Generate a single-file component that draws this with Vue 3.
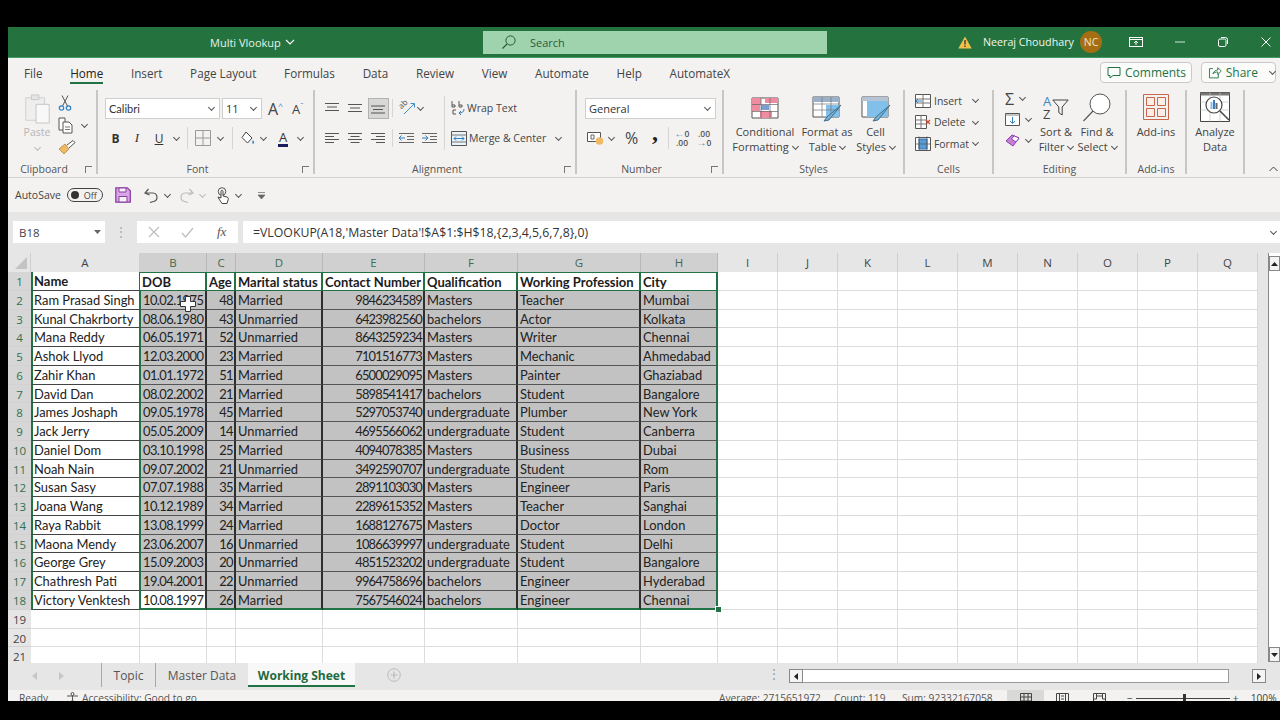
<script setup>
const tabs = ['File', 'Home', 'Insert', 'Page Layout', 'Formulas', 'Data', 'Review', 'View', 'Automate', 'Help', 'AutomateX']
const columns = ['A', 'B', 'C', 'D', 'E', 'F', 'G', 'H', 'I', 'J', 'K', 'L', 'M', 'N', 'O', 'P', 'Q']
const headers = ['Name', 'DOB', 'Age', 'Marital status', 'Contact Number', 'Qualification', 'Working Profession', 'City']
const people = [
  ['Ram Prasad Singh', '10.02.1975', '48', 'Married', '9846234589', 'Masters', 'Teacher', 'Mumbai'],
  ['Kunal Chakrborty', '08.06.1980', '43', 'Unmarried', '6423982560', 'bachelors', 'Actor', 'Kolkata'],
  ['Mana Reddy', '06.05.1971', '52', 'Unmarried', '8643259234', 'Masters', 'Writer', 'Chennai'],
  ['Ashok Llyod', '12.03.2000', '23', 'Married', '7101516773', 'Masters', 'Mechanic', 'Ahmedabad'],
  ['Zahir Khan', '01.01.1972', '51', 'Married', '6500029095', 'Masters', 'Painter', 'Ghaziabad'],
  ['David Dan', '08.02.2002', '21', 'Married', '5898541417', 'bachelors', 'Student', 'Bangalore'],
  ['James Joshaph', '09.05.1978', '45', 'Married', '5297053740', 'undergraduate', 'Plumber', 'New York'],
  ['Jack Jerry', '05.05.2009', '14', 'Unmarried', '4695566062', 'undergraduate', 'Student', 'Canberra'],
  ['Daniel Dom', '03.10.1998', '25', 'Married', '4094078385', 'Masters', 'Business', 'Dubai'],
  ['Noah Nain', '09.07.2002', '21', 'Unmarried', '3492590707', 'undergraduate', 'Student', 'Rom'],
  ['Susan Sasy', '07.07.1988', '35', 'Married', '2891103030', 'Masters', 'Engineer', 'Paris'],
  ['Joana Wang', '10.12.1989', '34', 'Married', '2289615352', 'Masters', 'Teacher', 'Sanghai'],
  ['Raya Rabbit', '13.08.1999', '24', 'Married', '1688127675', 'Masters', 'Doctor', 'London'],
  ['Maona Mendy', '23.06.2007', '16', 'Unmarried', '1086639997', 'undergraduate', 'Student', 'Delhi'],
  ['George Grey', '15.09.2003', '20', 'Unmarried', '4851523202', 'undergraduate', 'Student', 'Bangalore'],
  ['Chathresh Pati', '19.04.2001', '22', 'Unmarried', '9964758696', 'bachelors', 'Engineer', 'Hyderabad'],
  ['Victory Venktesh', '10.08.1997', '26', 'Married', '7567546024', 'bachelors', 'Engineer', 'Chennai'],
]

// A is plain, B18 is the active cell, everything else sits in the grey selection
const cellClass = (r, c) => {
  if (c === 0) return ['cell', 'name']
  const kind = { num: c === 1 || c === 2, phone: c === 4, right: c === 2 || c === 4 }
  if (r === 16 && c === 1) return ['cell', 'active', kind]
  return ['cell', 'sel', kind, { last: c === 7, bottom: r === 16, firstsel: c === 1 }]
}
</script>

<template>
  <div class="screen">
    <div class="excel">
      <!-- title bar -->
      <header class="titlebar">
        <div class="doc">Multi Vlookup
          <svg width="10" height="6" viewBox="0 0 10 6"><path d="M1 1l4 4 4-4" fill="none" stroke="#fff" stroke-width="1.1"/></svg>
        </div>
        <div class="search">
          <svg width="16" height="16" viewBox="0 0 16 16"><circle cx="9.500" cy="6.500" r="4.600" fill="none" stroke="#25593a" stroke-width="1"/><path d="M6 10l-4.500 4.500" stroke="#25593a" stroke-width="1.100"/></svg>
          <span>Search</span>
        </div>
        <div class="account">
          <svg width="14" height="13" viewBox="0 0 14 13"><path d="M7 .5l6.700 12H.3z" fill="#f1c04b"/><path d="M7 4v4.500M7 9.600v1.300" stroke="#333" stroke-width="1.300"/></svg>
          <span class="user">Neeraj Choudhary</span>
          <span class="avatar">NC</span>
        </div>
        <div class="winbtns">
          <svg width="14" height="12" viewBox="0 0 14 12"><rect x=".5" y="1.500" width="13" height="9" fill="none" stroke="#fff"/><path d="M.5 3.500h13M7 9V5M5 7l2-2 2 2" fill="none" stroke="#fff"/></svg>
          <svg width="12" height="12" viewBox="0 0 12 12"><path d="M1 6h10" stroke="#cfe3d6"/></svg>
          <svg width="12" height="12" viewBox="0 0 12 12"><rect x="1.500" y="3" width="7.500" height="7.500" rx="1.500" fill="none" stroke="#fff"/><path d="M4 1.500h4.500a2 2 0 0 1 2 2V8" fill="none" stroke="#fff"/></svg>
          <svg width="12" height="12" viewBox="0 0 12 12"><path d="M1.500 1.500l9 9M10.500 1.500l-9 9" stroke="#fff"/></svg>
        </div>
      </header>

      <!-- ribbon tabs -->
      <nav class="tabs">
        <span v-for="t in tabs" :key="t" class="tab" :class="{ on: t === 'Home' }">{{ t }}</span>
        <div class="tab-actions">
          <button class="pill comments">
            <svg width="14" height="13" viewBox="0 0 14 13"><path d="M1 1.500h12v8H6l-3 2.500V9.500H1z" fill="none" stroke="#217346"/></svg>
            Comments
          </button>
          <button class="pill share">
            <svg width="14" height="13" viewBox="0 0 14 13"><path d="M5 2.500H1.500v9.500h9V8M5 8c1-3 3-4 5-4V1.500L13.500 5 10 8.500V6C8 6 6 6.500 5 8z" fill="none" stroke="#217346" stroke-width=".9"/></svg>
            Share <i class="chev"></i>
          </button>
        </div>
      </nav>

      <!-- ribbon -->
      <section class="ribbon">
        <div class="group g-clip">
          <div class="body clip-body">
            <div class="paste">
              <svg width="28" height="30" viewBox="0 0 28 32"><path d="M2 4h20v24H2z" fill="#eee" stroke="#cfcfcf"/><path d="M8 1h8v5H8z" fill="#e4e4e4" stroke="#c8c8c8"/><path d="M13 11h14v20H13z" fill="#f8f8f8" stroke="#c4c4c4"/></svg>
              <span>Paste</span>
              <i class="chev faint"></i>
            </div>
            <div class="clip-tools">
              <svg width="14" height="16" viewBox="0 0 14 16"><path d="M4 .5l5.500 10.500M10 .5L4.500 11" stroke="#555" fill="none"/><circle cx="3.500" cy="13" r="2.200" fill="none" stroke="#2f7fc1" stroke-width="1.200"/><circle cx="10.500" cy="13" r="2.200" fill="none" stroke="#2f7fc1" stroke-width="1.200"/></svg>
              <div class="tool-chev">
                <svg width="17" height="17" viewBox="0 0 17 17"><path d="M1 1h6v12H1z" fill="#fff" stroke="#555"/><path d="M5 5h6l3 3v8H5z" fill="#fff" stroke="#555"/><path d="M7 10h5M7 12.500h5" stroke="#777"/></svg>
                <i class="chev"></i>
              </div>
              <svg width="18" height="15" viewBox="0 0 18 15"><path d="M1 9l6-5 4 5-5 5z" fill="#f0b964" stroke="#a77b3a" stroke-width=".7"/><path d="M9 5l6-4.500 2 2L11 8" fill="#fff" stroke="#555"/></svg>
            </div>
          </div>
          <footer class="label shifted">Clipboard<i class="launch"></i></footer>
        </div>

        <div class="group g-font">
          <div class="body">
            <div class="font-r1">
              <div class="combo font-name">Calibri<i class="chev"></i></div>
              <div class="combo font-size">11<i class="chev"></i></div>
              <span class="grow big">A<sup>^</sup></span>
              <span class="grow small">A<sup>ˇ</sup></span>
            </div>
            <div class="font-r2">
              <b class="cal">B</b>
              <i class="cal ital">I</i>
              <u class="cal">U</u>
              <i class="chev"></i>
              <i class="vsep"></i>
              <svg width="16" height="16" viewBox="0 0 16 16"><path d="M.5.500h15v15H.500zM8 .5v15M.5 8h15" fill="none" stroke="#9a9a9a"/></svg>
              <i class="chev"></i>
              <i class="vsep"></i>
              <svg width="15" height="14" viewBox="0 0 15 14"><path d="M6 1l6 6-4.500 5L2 6.500z" fill="#fff" stroke="#444"/><path d="M13 9c1 1.500 1.500 2 1 3.200-.6 1-2 .6-1.900-.6 0-.7.500-1.500.9-2.600z" fill="#3b8ec9"/></svg>
              <i class="chev"></i>
              <span class="color-a">A</span>
              <i class="chev"></i>
            </div>
          </div>
          <footer class="label shifted">Font<i class="launch"></i></footer>
        </div>

        <div class="group g-align">
          <div class="body align-body">
            <div class="align-grid">
              <svg class="ic" width="14" height="12" viewBox="0 0 14 12"><path d="M0 1.500h14M2 5h10M0 8.500h14" stroke="#555"/></svg>
              <svg class="ic" width="14" height="12" viewBox="0 0 14 12"><path d="M0 2.500h14M2 6h10M0 9.500h14" stroke="#555"/></svg>
              <span class="selected-btn"><svg width="14" height="12" viewBox="0 0 14 12"><path d="M0 4h14M2 7.500h10M0 11h14" stroke="#555"/></svg></span>
              <i class="vsep"></i>
              <span class="orient-btn">
                <span class="orient">ab</span>
                <svg width="18" height="16" viewBox="0 0 18 16"><path d="M6 14L16 4M12.500 3.500H16.500V7.500" fill="none" stroke="#3b8ec9"/></svg>
              </span>
              <i class="chev start"></i>
              <svg class="ic" width="14" height="12" viewBox="0 0 14 12"><path d="M0 1.500h14M0 4.500h9M0 7.500h14M0 10.500h9" stroke="#555"/></svg>
              <svg class="ic" width="14" height="12" viewBox="0 0 14 12"><path d="M0 1.500h14M2.500 4.500h9M0 7.500h14M2.500 10.500h9" stroke="#555"/></svg>
              <svg class="ic" width="14" height="12" viewBox="0 0 14 12"><path d="M0 1.500h14M5 4.500h9M0 7.500h14M5 10.500h9" stroke="#555"/></svg>
              <i class="vsep"></i>
              <svg width="15" height="12" viewBox="0 0 15 12"><path d="M0 1.500h15M8 4.500h7M8 7.500h7M0 10.500h15" stroke="#666"/><path d="M6 6H0M2.500 3.500L0 6l2.500 2.500" fill="none" stroke="#2f7fc1"/></svg>
              <svg width="15" height="12" viewBox="0 0 15 12"><path d="M0 1.500h15M8 4.500h7M8 7.500h7M0 10.500h15" stroke="#666"/><path d="M0 6h6M3.500 3.500L6 6 3.500 8.500" fill="none" stroke="#2f7fc1"/></svg>
            </div>
            <i class="vsep tall"></i>
            <div class="align-right">
              <div class="wrap-item">
                <svg width="14" height="16" viewBox="0 0 14 16"><path d="M1 1v6M1 5h3v2H1M8 1v6h3V5H8" fill="none" stroke="#555"/><path d="M13 9c0 3-2 4-5 4M10 11l-2 2 2 2" fill="none" stroke="#2f7fc1"/><path d="M5 10H2v4h3" fill="none" stroke="#555"/></svg>
                Wrap Text
              </div>
              <div class="wrap-item">
                <svg width="16" height="15" viewBox="0 0 16 15"><path d="M.5.500h15v14H.500z" fill="#eaf3fa" stroke="#555"/><path d="M.5 4h15M.5 11h15" stroke="#777"/><path d="M3 7.500h10M5 5.500l-2 2 2 2M11 5.500l2 2-2 2" fill="none" stroke="#2f7fc1"/></svg>
                Merge &amp; Center <i class="chev merge-chev"></i>
              </div>
            </div>
          </div>
          <footer class="label shifted">Alignment<i class="launch"></i></footer>
        </div>

        <div class="group g-num">
          <div class="body">
            <div class="combo general">General<i class="chev"></i></div>
            <div class="num-r2">
              <svg width="17" height="13" viewBox="0 0 17 13"><path d="M.5.500h13v9H.500z" fill="#fff" stroke="#555"/><path d="M4 3h3v4H4z" fill="none" stroke="#666"/><circle cx="12.500" cy="9" r="3.800" fill="#f0b964"/></svg>
              <i class="chev"></i>
              <span class="percent">%</span>
              <span class="comma">,</span>
              <i class="vsep"></i>
              <span class="dec"><em>←</em>0<br>.00</span>
              <span class="dec">.00<br><em>→</em>0</span>
            </div>
          </div>
          <footer class="label shifted">Number<i class="launch"></i></footer>
        </div>

        <div class="group g-styles">
          <div class="body big-row">
            <div class="big-btn b-cond">
              <svg width="28" height="22" viewBox="0 0 28 22"><path d="M1 1h26v20H1z" fill="#fff" stroke="#555"/><path d="M1 1h9v7H1zM14 1h13v5H14zM9 14h12v7H9z" fill="#ee8d9f"/><path d="M1 8h8v6H1z" fill="#ee8d9f"/><path d="M10 8h8v5h-8z" fill="#7d9fd0"/><path d="M1 7.500h26M1 14.500h26M10 1v20M19 1v20" stroke="#666" fill="none" stroke-width=".7"/></svg>
              <span>Conditional</span>
              <span>Formatting <i class="chev"></i></span>
            </div>
            <div class="big-btn b-fmt">
              <svg width="30" height="26" viewBox="0 0 30 26"><path d="M1 1h26v20H1z" fill="#fff" stroke="#555"/><path d="M1 1h26v5H1z" fill="#9ab0c8"/><path d="M14 9h13v12H14z" fill="#80c0ea"/><path d="M1 8h26M1 14h26M10 1v20M19 1v20" stroke="#777" stroke-width=".7"/><path d="M29 9L15 21l-3 4 5-1z" fill="#7db0d0" stroke="#3c6f90"/></svg>
              <span>Format as</span>
              <span>Table <i class="chev"></i></span>
            </div>
            <div class="big-btn b-cell">
              <svg width="30" height="26" viewBox="0 0 30 26"><path d="M1 1h26v20H1z" fill="#fff" stroke="#555"/><path d="M1 1h26v4H1z" fill="#b4c4d4"/><path d="M6 5h21v16H6z" fill="#80c0ea"/><path d="M29 9L15 21l-3 4 5-1z" fill="#7db0d0" stroke="#3c6f90"/></svg>
              <span>Cell</span>
              <span>Styles <i class="chev"></i></span>
            </div>
          </div>
          <footer class="label">Styles</footer>
        </div>

        <div class="group g-cells">
          <div class="body small-list">
            <div class="list-item">
              <svg width="16" height="14" viewBox="0 0 16 14"><path d="M.5.500h15v13H.500z" fill="#fff" stroke="#555"/><path d="M8 .5v13M.5 5h15M.5 9h15" stroke="#777"/><path d="M7 7H1M3 5L1 7l2 2" fill="none" stroke="#2f7fc1"/></svg>
              <span>Insert</span><i class="chev"></i>
            </div>
            <div class="list-item">
              <svg width="16" height="14" viewBox="0 0 16 14"><path d="M.5.500h11v13H.500z" fill="#fff" stroke="#555"/><path d="M.5 5h11M.5 9h11M6 .5v13" stroke="#777"/><path d="M11 5l4 4M15 5l-4 4" stroke="#d1492f" stroke-width="1.200"/></svg>
              <span>Delete</span><i class="chev"></i>
            </div>
            <div class="list-item">
              <svg width="16" height="15" viewBox="0 0 16 15"><path d="M.5 1.500h15v13H.500z" fill="#fff" stroke="#555"/><path d="M4 3h8v10H4z" fill="#5b9bd5" stroke="#2f6fa5"/><path d="M4 .5v14M12 .5v14M.5 8h15" stroke="#555" stroke-width=".7"/></svg>
              <span>Format</span><i class="chev"></i>
            </div>
          </div>
          <footer class="label">Cells</footer>
        </div>

        <div class="group g-edit">
          <div class="body edit-body">
            <div class="edit-tools">
              <div class="tool-chev tool-sum">Σ<i class="chev"></i></div>
              <div class="tool-chev">
                <svg width="15" height="13" viewBox="0 0 15 13"><path d="M.5.500h14v12H.500z" fill="#fff" stroke="#555"/><path d="M.5 2h14" stroke="#888"/><path d="M7.500 4v6M5 8l2.500 2.500L10 8" fill="none" stroke="#2f7fc1"/></svg>
                <i class="chev"></i>
              </div>
              <div class="tool-chev">
                <svg width="15" height="13" viewBox="0 0 15 13"><path d="M1 7l6-6 7 3-6 8z" fill="#c77fd6" stroke="#8b3fa5"/><path d="M9 1.800l5 2.200-3 4-4.500-3z" fill="#fff" stroke="#8b3fa5"/></svg>
                <i class="chev"></i>
              </div>
            </div>
            <div class="big-btn b-sort">
              <div class="sort-icon">
                <div class="az"><b class="blue">A</b><b>Z</b></div>
                <svg width="17" height="17" viewBox="0 0 17 17"><path d="M.8 1h15.400l-6 7v8l-3.400-2.400V8z" fill="none" stroke="#444"/></svg>
              </div>
              <span>Sort &amp;</span>
              <span>Filter <i class="chev"></i></span>
            </div>
            <div class="big-btn b-find">
              <svg width="30" height="29" viewBox="0 0 30 29"><circle cx="18" cy="11" r="10" fill="#fff" stroke="#555"/><path d="M11 18L1.500 28" stroke="#555" stroke-width="1.100"/></svg>
              <span>Find &amp;</span>
              <span>Select <i class="chev"></i></span>
            </div>
          </div>
          <footer class="label">Editing</footer>
        </div>

        <div class="group g-add">
          <div class="body big-row">
            <div class="big-btn b-add">
              <svg width="26" height="26" viewBox="0 0 26 26"><path d="M.5.500h25v25H.500z" fill="none" stroke="#c8664a"/><path d="M3.500 3.500h8v8h-8zM14.500 3.500h8v8h-8zM3.500 14.500h8v8h-8zM14.500 14.500h8v8h-8z" fill="#fbeee9" stroke="#c8664a"/></svg>
              <span>Add-ins</span>
            </div>
          </div>
          <footer class="label">Add-ins</footer>
        </div>

        <div class="group g-ana">
          <div class="body big-row">
            <div class="big-btn b-ana">
              <svg width="30" height="30" viewBox="0 0 30 30"><path d="M.5.500h29v29H.500z" fill="#fff" stroke="#444"/><path d="M.5.500h29v3H.500z" fill="#777"/><path d="M.5 10h29M.5 18h29M10 .5v29M20 .5v29" stroke="#c2c2c2" stroke-width=".7"/><circle cx="14" cy="13" r="8" fill="#fff" stroke="#444" stroke-width="1.200"/><path d="M10.500 10h2v7h-2z" fill="#8fb8dc"/><path d="M13 8h2v9h-2z" fill="#3d7fbe"/><path d="M15.500 11h2v6h-2z" fill="#666"/><path d="M20 19l9 9" stroke="#444" stroke-width="1.500"/></svg>
              <span>Analyze</span>
              <span>Data</span>
            </div>
          </div>
        </div>

        <svg class="collapse" width="9" height="6" viewBox="0 0 9 6"><path d="M.5 5l4-4 4 4" fill="none" stroke="#444"/></svg>
      </section>

      <!-- quick access -->
      <div class="qat">
        <span class="qat-label">AutoSave</span>
        <span class="toggle"><i></i>Off</span>
        <svg class="save" width="16" height="16" viewBox="0 0 16 16"><path d="M.8.800h11.500l3 3v11.400H.8z" fill="#d8a6e6" stroke="#8d3fa5" stroke-width="1.300"/><path d="M4 1h7v4H4zM4 9.500h8V15H4z" fill="#f3f2f1" stroke="#8d3fa5"/></svg>
        <svg class="undo" width="15" height="15" viewBox="0 0 15 15"><path d="M4.500 1L1 5l4.500 2M1.500 5H9a4.300 4.300 0 0 1 .5 8.500L6 14.500" fill="none" stroke="#555" stroke-width="1.200"/></svg>
        <i class="chev"></i>
        <svg class="redo" width="15" height="15" viewBox="0 0 15 15"><path d="M10.500 1L14 5 9.500 7M13.500 5H6a4.300 4.300 0 0 0-.5 8.500L9 14.500" fill="none" stroke="#bbb" stroke-width="1.200"/></svg>
        <i class="chev faint"></i>
        <svg class="touch" width="14" height="17" viewBox="0 0 14 17"><circle cx="6" cy="4.500" r="3.800" fill="none" stroke="#555"/><path d="M5 4.500c0-1.500 2-1.500 2 0V9l4 1c1.500.5 1.500 2 1 3l-1 3.500H6L3 12l-1-2 3 1z" fill="#fff" stroke="#444"/></svg>
        <i class="chev"></i>
        <svg class="custom" width="9" height="9" viewBox="0 0 9 9"><path d="M1 1.500h7M1 4h7L4.500 8z" fill="#666" stroke="#666" stroke-width=".7"/></svg>
      </div>

      <!-- formula bar -->
      <div class="formula">
        <div class="namebox">B18<svg width="7" height="4" viewBox="0 0 7 4"><path d="M0 0h7L3.500 4z" fill="#666"/></svg></div>
        <span class="grip">⋮</span>
        <div class="fxbox">
          <svg width="12" height="12" viewBox="0 0 12 12"><path d="M1 1l10 10M11 1L1 11" stroke="#bdbdbd" stroke-width="1.200"/></svg>
          <svg width="13" height="11" viewBox="0 0 13 11"><path d="M1 6l3.500 4L12 1" fill="none" stroke="#bdbdbd" stroke-width="1.200"/></svg>
          <span class="fx">fx</span>
        </div>
        <div class="fxinput">
          <span>=VLOOKUP(A18,'Master Data'!$A$1:$H$18,{2,3,4,5,6,7,8},0)</span>
          <i class="chev"></i>
        </div>
      </div>

      <!-- sheet -->
      <div class="sheet-wrap">
        <div class="sheet">
          <div class="corner"><i></i></div>
          <div v-for="(c, i) in columns" :key="c" class="colhead" :class="{ hl: i > 0 && i < 8 }">{{ c }}</div>
          <div class="rowhead hl">1</div>
          <template v-for="(h, c) in headers" :key="h">
            <div class="cell head" :class="{ name: c === 0 }">{{ h }}</div>
          </template>
          <div v-for="c in 9" :key="'h' + c" class="blank"></div>
          <template v-for="(p, r) in people" :key="r">
            <div class="rowhead hl">{{ r + 2 }}</div>
            <div v-for="(v, c) in p" :key="c" :class="cellClass(r, c)">{{ v }}</div>
            <div v-for="c in 9" :key="'b' + c" class="blank"></div>
          </template>
          <template v-for="r in [19, 20, 21]" :key="r">
            <div class="rowhead">{{ r }}</div>
            <div v-for="c in 17" :key="c" class="blank"></div>
          </template>
          <i class="fill-handle"></i>
          <svg class="cursor" width="18" height="18" viewBox="0 0 18 18"><path d="M6.500 1.500h5v5h5v5h-5v5h-5v-5h-5v-5h5z" fill="#fff" stroke="#333"/></svg>
        </div>
        <div class="vscroll">
          <span class="vbtn"><svg width="7" height="4" viewBox="0 0 7 4"><path d="M3.500 0L7 4H0z" fill="#222"/></svg></span>
          <span class="vtrack"></span>
          <span class="vbtn"><svg width="7" height="4" viewBox="0 0 7 4"><path d="M0 0h7L3.500 4z" fill="#222"/></svg></span>
        </div>
      </div>

      <!-- sheet tabs -->
      <div class="sheetbar">
        <div class="nav-arrows">
          <svg width="5" height="8" viewBox="0 0 5 8"><path d="M5 0v8L0 4z" fill="#c6c6c6"/></svg>
          <svg width="5" height="8" viewBox="0 0 5 8"><path d="M0 0v8l5-4z" fill="#c6c6c6"/></svg>
        </div>
        <span class="stab first">Topic</span>
        <span class="stab master">Master Data</span>
        <span class="stab current">Working Sheet</span>
        <svg class="addsheet" width="14" height="14" viewBox="0 0 14 14"><circle cx="7" cy="7" r="6.300" fill="none" stroke="#bbb"/><path d="M7 3.500v7M3.500 7h7" stroke="#bbb" stroke-width="1.200"/></svg>
        <span class="dots">⋮</span>
        <div class="hscroll">
          <span class="hbtn"><svg width="4" height="7" viewBox="0 0 4 7"><path d="M4 0v7L0 3.500z" fill="#222"/></svg></span>
          <span class="htrack"></span>
          <span class="hgap"></span>
          <span class="hbtn"><svg width="4" height="7" viewBox="0 0 4 7"><path d="M0 0v7l4-3.500z" fill="#222"/></svg></span>
        </div>
      </div>

      <!-- status bar -->
      <footer class="status">
        <span class="ready">Ready</span>
        <span class="a11y">
          <svg width="13" height="13" viewBox="0 0 13 13"><circle cx="6.500" cy="2" r="1.500" fill="none" stroke="#555"/><path d="M1 4h11M6.500 4v4l-3 4M6.500 8l3 4" fill="none" stroke="#555"/></svg>
          Accessibility: Good to go
        </span>
        <span class="avg">Average: 2715651972</span>
        <span class="count">Count: 119</span>
        <span class="total">Sum: 92332167058</span>
        <span class="view on"><svg width="12" height="12" viewBox="0 0 12 12"><path d="M.5.500h11v11H.500zM4 .5v11M8 .5v11M.5 4h11M.5 8h11" fill="none" stroke="#444"/></svg></span>
        <span class="view"><svg width="13" height="12" viewBox="0 0 13 12"><path d="M.5.500h12v11H.500zM3.500.5v11M9.500.5v11M5 3h3M5 6h3" fill="none" stroke="#444"/></svg></span>
        <span class="view"><svg width="13" height="12" viewBox="0 0 13 12"><path d="M.5.500h12v11H.500zM.5 6h3V.5M12.500 6h-3V.5M3.500 3h6" fill="none" stroke="#444"/></svg></span>
        <span class="zoom">
          <em>−</em>
          <span class="slider"><i></i></span>
          <em>+</em>
          <span class="pct">100%</span>
        </span>
      </footer>
    </div>
  </div>
</template>

<style scoped>
.screen {
  width: 1280px;
  height: 720px;
  background: #000;
  padding: 27px 0 0 8px;
  box-sizing: border-box;
  overflow: hidden;
  font-family: "Open Sans", "Noto Sans", sans-serif;
  color: #444;
}
.excel {
  height: 674px;
  width: 1272px;
  overflow: hidden;
  background: #f3f2f1;
  display: flex;
  flex-direction: column;
}
i, em { font-style: normal; }

.chev {
  display: inline-block;
  width: 4px;
  height: 4px;
  border-right: 1px solid #555;
  border-bottom: 1px solid #555;
  transform: rotate(45deg);
  margin-bottom: 2px;
  flex: none;
}
.chev.faint { border-color: #bbb; }
.vsep {
  display: block;
  width: 1px;
  height: 22px;
  background: #d6d5d3;
}
.vsep.tall { height: 54px; margin: 6px 6px 0 3px; }

/* title bar */
.titlebar {
  height: 31px;
  flex: none;
  background: #24733f;
  border-bottom: 1px solid #3f9a63;
  box-sizing: border-box;
  display: flex;
  align-items: center;
  color: #fff;
  font-size: 11px;
}
.doc {
  margin-left: 202px;
  width: 273px;
  display: flex;
  align-items: center;
  gap: 4px;
  color: #e6f3ea;
}
.search {
  width: 344px;
  height: 23px;
  background: #9fd3ae;
  display: flex;
  align-items: center;
  color: #2c5a3e;
  font-size: 11px;
  padding-left: 18px;
  gap: 13px;
  box-sizing: border-box;
}
.account {
  margin-left: 131px;
  display: flex;
  align-items: center;
}
.user { margin: 0 8px 0 11px; width: 89px; white-space: nowrap; font-size: 10.700px; color: #eef6f0; }
.avatar {
  width: 22px;
  height: 22px;
  border-radius: 50%;
  background: #a56e12;
  font-size: 10.500px;
  line-height: 22px;
  text-align: center;
  color: #f5e3c4;
}
.winbtns {
  margin-left: 27px;
  display: flex;
  align-items: center;
  gap: 31px;
}

/* tabs */
.tabs {
  height: 30px;
  flex: none;
  display: flex;
  align-items: center;
  font-size: 11.700px;
  color: #444;
  padding-left: 16px;
  position: relative;
}
.tab { margin-right: 27.700px; position: relative; white-space: nowrap; line-height: 30px; }
.tab.on { color: #222; }
.tab.on::after {
  content: "";
  position: absolute;
  left: 0;
  right: 0;
  bottom: 4px;
  height: 2px;
  background: #217346;
}
.tab-actions {
  position: absolute;
  left: 1092px;
  top: 4px;
  display: flex;
  gap: 9px;
}
.pill {
  height: 21px;
  background: #fbfbfa;
  border: 1px solid #c9c9c9;
  border-radius: 4px;
  display: flex;
  align-items: center;
  gap: 4px;
  font: 12px "Open Sans", sans-serif;
  color: #217346;
  padding: 0 0 0 6px;
  box-sizing: border-box;
}
.comments { width: 92px; }
.share { width: 75px; }
.share .chev { margin-left: 8px; }

/* ribbon */
.ribbon {
  height: 90px;
  flex: none;
  display: flex;
  border-bottom: 1px solid #d3d2d0;
  box-sizing: border-box;
  font-size: 11px;
  position: relative;
}
.group {
  position: relative;
  display: flex;
  flex-direction: column;
  box-sizing: border-box;
  height: 84px;
  margin-top: 2px;
  border-right: 2px solid #c6c6c4;
}
.body { height: 68px; flex: none; box-sizing: border-box; }
.label {
  height: 16px;
  line-height: 15px;
  font-size: 10.500px;
  text-align: center;
  color: #555;
  position: relative;
  top: 4px;
  box-sizing: border-box;
}
.label.shifted { padding-right: 16px; }
.launch {
  position: absolute;
  right: 4px;
  top: 4px;
  width: 6px;
  height: 6px;
  border-top: 1px solid #777;
  border-left: 1px solid #777;
}
.g-clip { width: 90px; }
.g-font { width: 217px; }
.g-align { width: 262px; }
.g-num { width: 147px; }
.g-styles { width: 181px; }
.g-cells { width: 89px; }
.g-edit { width: 133px; }
.g-add { width: 60px; }
.g-ana { width: 58px; }

.clip-body { display: flex; padding: 4px 0 0 15px; gap: 7px; }
.paste { display: flex; flex-direction: column; align-items: center; width: 28px; color: #b5b5b5; font-size: 10.500px; }
.paste span { margin: 1px 0 6px; }
.clip-tools { display: flex; flex-direction: column; gap: 6px; padding-top: 1px; }
.tool-chev { display: flex; align-items: center; gap: 7px; }

.font-r1 { display: flex; align-items: center; padding: 8px 0 0 7px; gap: 2px; }
.combo {
  height: 21px;
  background: #fff;
  border: 1px solid #cfcfcd;
  box-sizing: border-box;
  display: flex;
  align-items: center;
  justify-content: space-between;
  padding: 0 5px 0 3px;
  color: #333;
  font-size: 11px;
}
.font-name { width: 115px; font-family: "Lato", sans-serif; }
.font-size { width: 40px; }
.grow { color: #444; line-height: 20px; }
.grow sup { font-size: 8px; color: #3f85c0; vertical-align: 6px; line-height: 0; }
.big { font-size: 16px; margin-left: 4px; width: 22px; }
.small { font-size: 13px; }
.font-r2 {
  display: grid;
  grid-template-columns: 21px 22px 22px 12px 10px 22px 12px 12px 18px 14px 26px 8px;
  justify-items: center;
  align-items: center;
  margin: 8px 0 0 7px;
  height: 22px;
  font-size: 13px;
  color: #333;
}
.cal { font-family: "Liberation Serif", serif; font-size: 13px; }
b.cal { font-family: "Open Sans", sans-serif; font-size: 12px; }
u.cal { font-family: "Open Sans", sans-serif; font-size: 12px; }
.ital { font-style: italic; }
.color-a {
  font-size: 13px;
  line-height: 14px;
  border-bottom: 3px solid #1a1a5e;
  padding: 0 1px;
}

.align-body { display: flex; }
.align-grid {
  display: grid;
  grid-template-columns: 22px 24px 22px 6px 23px 23px;
  grid-auto-rows: 22px;
  row-gap: 8px;
  justify-items: center;
  align-items: center;
  padding: 7px 0 0 6px;
}
.align-grid .vsep { height: 18px; }
.start { justify-self: start; }
.orient-btn { position: relative; display: block; width: 18px; height: 16px; }
.orient {
  position: absolute;
  left: 0;
  top: -1px;
  font-size: 8px;
  line-height: 10px;
  color: #555;
  transform: rotate(-45deg);
}
.selected-btn {
  width: 21px;
  height: 21px;
  background: #d8d8d6;
  border: 1px solid #b2b2b0;
  box-sizing: border-box;
  display: flex;
  align-items: center;
  justify-content: center;
}
.align-right { display: flex; flex-direction: column; gap: 8px; padding-top: 7px; }
.wrap-item { display: flex; align-items: center; gap: 2px; height: 22px; white-space: nowrap; font-size: 10.500px; }
.merge-chev { margin-left: 8px; }

.g-num .body { padding: 8px 0 0 8px; }
.general { width: 131px; font-size: 11px; }
.num-r2 {
  display: grid;
  grid-template-columns: 20px 12px 29px 18px 8px 20px 24px;
  justify-items: center;
  align-items: center;
  margin-top: 8px;
  height: 22px;
}
.percent { font-size: 16px; color: #444; }
.comma { font: 700 24px/14px "Liberation Serif", serif; color: #222; position: relative; top: -6px; }
.dec { font-size: 8.500px; line-height: 9px; color: #555; text-align: center; font-weight: 600; }
.dec em { color: #3f85c0; font-size: 10px; line-height: 9px; }

.big-row { display: flex; }
.big-btn {
  display: flex;
  flex-direction: column;
  align-items: center;
  white-space: nowrap;
  line-height: 15px;
  font-size: 11px;
  color: #444;
}
.big-btn > svg { flex: none; margin-bottom: 2px; }
.big-btn > span { display: block; }
.big-btn .chev { margin-left: 1px; }
.b-cond { width: 82px; padding-top: 7px; }
.b-cond > svg { margin-bottom: 5px; }
.b-fmt { width: 42px; padding-top: 6px; }
.b-cell { width: 55px; padding-top: 6px; }
.small-list { display: flex; flex-direction: column; gap: 2px; padding: 1px 0 0 10px; }
.list-item { display: flex; align-items: center; height: 19.500px; gap: 3px; font-size: 10.400px; }
.list-item span { width: 36px; }
.edit-body { display: flex; }
.edit-tools { display: flex; flex-direction: column; gap: 4px; padding: 0 0 0 11px; width: 30px; }
.edit-tools .tool-chev { height: 17px; gap: 6px; }
.tool-sum { font-size: 16px; color: #444; }
.b-sort { width: 42px; padding-top: 3px; }
.sort-icon { display: flex; align-items: center; gap: 1px; height: 29px; margin-bottom: 2px; }
.az { display: flex; flex-direction: column; font-size: 13px; line-height: 13px; color: #444; }
.az b { font-weight: 400; }
.az .blue { color: #3f85c0; }
.b-find { width: 40px; padding-top: 3px; }
.b-add { width: 58px; padding-top: 4px; }
.b-add > svg { margin-bottom: 4px; }
.b-ana { width: 56px; padding-top: 2px; }
.collapse { position: absolute; right: 2px; bottom: 5px; }

/* quick access */
.qat {
  height: 34px;
  flex: none;
  display: flex;
  align-items: center;
  padding-left: 7px;
  font-size: 10.500px;
  color: #444;
}
.toggle {
  margin-left: 6px;
  width: 36px;
  height: 14px;
  border: 1px solid #444;
  border-radius: 8px;
  font-size: 9px;
  display: flex;
  align-items: center;
  justify-content: flex-end;
  padding-right: 5px;
  box-sizing: border-box;
  position: relative;
}
.toggle i {
  position: absolute;
  left: 3px;
  top: 2px;
  width: 8px;
  height: 8px;
  border-radius: 50%;
  background: #333;
}
.save { margin-left: 12px; }
.undo { margin-left: 13px; }
.qat .chev { margin-left: 6px; }
.redo { margin-left: 9px; }
.touch { margin-left: 11px; }
.custom { margin-left: 16px; }

/* formula bar */
.formula {
  height: 41px;
  flex: none;
  background: #e6e6e6;
  display: flex;
  align-items: flex-start;
  padding: 9px 0 0 5px;
  box-sizing: border-box;
}
.namebox {
  width: 92px;
  height: 22px;
  background: #fff;
  font-size: 11.500px;
  color: #444;
  display: flex;
  align-items: center;
  justify-content: space-between;
  padding: 0 4px 0 6px;
  box-sizing: border-box;
}
.grip { width: 32px; text-align: center; color: #aaa; font-size: 12px; line-height: 22px; }
.fxbox {
  width: 101px;
  height: 22px;
  background: #fff;
  display: flex;
  align-items: center;
  padding-left: 11px;
  gap: 21px;
  box-sizing: border-box;
}
.fx { font: italic 13px "Liberation Serif", serif; color: #555; margin-left: 2px; }
.fxinput {
  margin-left: 5px;
  flex: 1;
  height: 22px;
  background: #fff;
  font-size: 12.300px;
  color: #333;
  display: flex;
  align-items: center;
  justify-content: space-between;
  padding: 0 4px 0 10px;
  box-sizing: border-box;
}

/* sheet */
.sheet-wrap {
  height: 410px;
  flex: none;
  display: flex;
  background: #e6e6e6;
  overflow: hidden;
}
.sheet {
  position: relative;
  display: grid;
  grid-template-columns: 23px 109px 67px 29px 87px 102px 93px 123px 77px repeat(9, 60px);
  grid-template-rows: 19px repeat(21, 18.780px);
  align-content: start;
  width: 1250px;
  flex: none;
  font: 12.900px "Lato", "Liberation Sans", sans-serif;
  color: #222;
  background: #fff;
}
.corner { background: #e6e6e6; position: relative; border-right: 1px solid #cfcfcf; }
.corner i {
  position: absolute;
  right: 3px;
  bottom: 3px;
  width: 0;
  height: 0;
  border-left: 12px solid transparent;
  border-bottom: 12px solid #c4c4c4;
}
.colhead {
  background: #e6e6e6;
  border-right: 1px solid #cfcfcf;
  text-align: center;
  line-height: 19px;
  font-size: 11.500px;
  font-family: "Open Sans", sans-serif;
  color: #444;
  box-sizing: border-box;
}
.colhead.hl { background: #d0d0d0; color: #3f6a50; border-right-color: #b8b8b8; }
.rowhead {
  background: #e6e6e6;
  border-bottom: 1px solid #d2d2d2;
  text-align: center;
  font-size: 11.500px;
  font-family: "Open Sans", sans-serif;
  line-height: 19px;
  color: #444;
  box-sizing: border-box;
  overflow: hidden;
}
.rowhead.hl { background: #d6d6d6; color: #2f7050; }
.blank { border-right: 1px solid #dcdcdc; border-bottom: 1px solid #dcdcdc; box-sizing: border-box; }
.cell {
  box-sizing: border-box;
  white-space: nowrap;
  overflow: hidden;
  padding-left: 2px;
  line-height: 19px;
  background: #fff;
}
.cell.head {
  font-weight: 700;
  border-top: 1px solid #217346;
  border-bottom: 1px solid #217346;
  border-right: 2px solid #217346;
  padding-left: 2px;
  color: #1c1c1c;
  font-size: 13px;
}
.cell.head.name {
  border-top: none;
  border-bottom: 1px solid #444;
  border-left: 2px solid #217346;
  border-right-width: 1px;
  padding-left: 1px;
}
.cell.name { border-left: 2px solid #217346; border-bottom: 1px solid #444; border-right: 1px solid #217346; padding-left: 1px; }
.cell.active { border-right: 2px solid #333; border-bottom: 2px solid #217346; border-left: 1px solid #217346; }
.cell.sel {
  background: #c2c2c2;
  border-right: 2px solid #2e2e2e;
  border-bottom: 1.500px solid #555;
}
.cell.sel.firstsel { border-left: 1px solid #217346; }
.cell.right { text-align: right; padding-right: 1px; }
.cell.num { letter-spacing: -0.55px; }
.cell.phone { letter-spacing: -0.8px; }
.cell.sel.last { border-right: 2px solid #217346; }
.cell.sel.bottom { border-bottom: 2px solid #217346; }
.fill-handle {
  position: absolute;
  left: 707px;
  top: 353px;
  width: 5px;
  height: 5px;
  background: #217346;
  border: 1px solid #fff;
}
.cursor { position: absolute; left: 171px; top: 42px; }
.vscroll {
  margin-left: 10px;
  width: 12px;
  display: flex;
  flex-direction: column;
  height: 409px;
  padding-top: 3px;
  box-sizing: border-box;
  background: #fff;
  border-left: 1px solid #888;
}
.vbtn {
  height: 13px;
  border: 1px solid #888;
  background: #f4f4f4;
  display: flex;
  align-items: center;
  justify-content: center;
  flex: none;
}
.vtrack { flex: 1; background: #fff; }

/* sheet tabs */
.sheetbar {
  height: 27px;
  flex: none;
  background: #e6e6e6;
  display: flex;
  align-items: flex-start;
  font-size: 12px;
  position: relative;
}
.nav-arrows { width: 93px; display: flex; gap: 22px; padding: 9px 0 0 24px; box-sizing: border-box; }
.stab { height: 24px; line-height: 25px; text-align: center; color: #555; border-left: 1px solid #a8a8a8; box-sizing: border-box; }
.first { width: 54px; }
.master { width: 93px; }
.current {
  width: 107px;
  font-weight: 700;
  color: #1e6b3c;
  background: #f8f8f8;
  border-bottom: 2px solid #217346;
  border-left: none;
  height: 24px;
}
.addsheet { margin: 5px 0 0 32px; }
.dots { margin: 2px 0 0 367px; color: #999; }
.hscroll { display: flex; margin: 6px 0 0 9px; width: 477px; height: 14px; }
.hbtn {
  width: 14px;
  height: 14px;
  background: #f4f4f4;
  border: 1px solid #888;
  box-sizing: border-box;
  display: flex;
  align-items: center;
  justify-content: center;
  flex: none;
}
.htrack { width: 426px; background: #fff; border: 1px solid #999; border-left: none; box-sizing: border-box; }
.hgap { flex: 1; }

/* status */
.status {
  height: 24px;
  flex: none;
  background: #f3f2f1;
  display: flex;
  align-items: flex-start;
  font-size: 10.200px;
  color: #555;
  white-space: nowrap;
  position: relative;
  line-height: 17px;
}
.ready { margin-left: 11px; width: 47px; }
.a11y { width: 653px; display: flex; align-items: center; gap: 3px; height: 17px; }
.avg { width: 115px; }
.count { width: 68px; }
.total { width: 105px; }
.view { width: 37px; height: 17px; display: flex; align-items: flex-start; justify-content: center; padding-top: 3px; box-sizing: border-box; }
.view.on { background: #d9d9d7; }
.zoom { margin-left: 9px; display: flex; align-items: center; height: 17px; color: #444; }
.slider { width: 94px; height: 1px; background: #444; margin: 0 3px; position: relative; }
.slider i { position: absolute; left: 47px; top: -4px; width: 3px; height: 9px; background: #333; }
.pct { margin-left: 12px; }
</style>

<style>
html, body { margin: 0; background: #000; }
</style>
